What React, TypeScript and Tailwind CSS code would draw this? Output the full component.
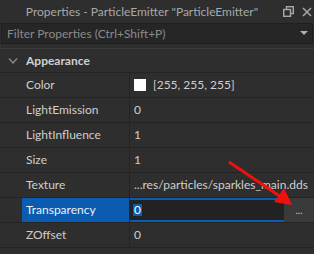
import React from "react";

function Row({ name, children, selected }: { name: string; children: React.ReactNode; selected?: boolean }) {
  return (
    <div className="flex h-[25px] border-b border-[#242424]">
      <div className="w-[22px] shrink-0" />
      <div
        className={
          selected
            ? "w-[107px] shrink-0 flex items-center pl-[4px] bg-[#0b5cb1] text-[#f0f0f0]"
            : "w-[107px] shrink-0 flex items-center pl-[4px] text-[#cfcfcf]"
        }
      >
        {name}
      </div>
      <div className="w-px bg-[#242424] shrink-0" />
      <div className="flex-1 flex items-center min-w-0">{children}</div>
    </div>
  );
}

export default function App() {
  return (
    <div
      className="w-[314px] h-[254px] bg-[#2e2e2e] overflow-hidden relative text-[12px] leading-none"
      style={{ fontFamily: "Lato, 'Noto Sans', sans-serif" }}
    >
      {/* Title bar */}
      <div className="h-[23px] flex items-center relative">
        <div className="w-full text-center text-[#a8a8a8] text-[12px] pr-[30px]">
          Properties - ParticleEmitter "ParticleEmitter"
        </div>
        <div className="absolute right-[2px] top-[6px] flex items-center gap-[8px]">
          <svg width="11" height="11" viewBox="0 0 11 11" fill="none" stroke="#a8a8a8" strokeWidth="1.4">
            <rect x="3.5" y="0.7" width="6.8" height="6.8" />
            <rect x="0.7" y="3.5" width="6.8" height="6.8" fill="#2e2e2e" />
          </svg>
          <svg width="10" height="10" viewBox="0 0 10 10" stroke="#a8a8a8" strokeWidth="1.5">
            <path d="M1 1L9 9M9 1L1 9" />
          </svg>
        </div>
      </div>
      {/* Filter */}
      <div className="mx-[1px] h-[21px] bg-[#262626] border border-[#1e1e1e] flex items-center pl-[5px] pr-[4px]">
        <span className="flex-1 text-[#8a8a8a] text-[12px]">Filter Properties (Ctrl+Shift+P)</span>
        <svg width="8" height="5" viewBox="0 0 8 5">
          <path d="M0 0H8L4 4Z" fill="#b0b0b0" />
        </svg>
      </div>
      <div className="h-[4px]" />
      {/* Section */}
      <div className="border-t border-[#3a3a3a]">
        <div className="h-[24px] flex items-center border-b border-[#242424]">
          <div className="w-[26px] flex justify-center">
            <svg width="10" height="6" viewBox="0 0 10 6" fill="none" stroke="#8a8a8a" strokeWidth="1.3">
              <path d="M1 0.5L5 5L9 0.5" />
            </svg>
          </div>
          <span className="font-bold text-[#d0d0d0] text-[12px]">Appearance</span>
        </div>
        <Row name="Color">
          <div className="ml-[4px] w-[12px] h-[12px] bg-white" />
          <span className="ml-[7px] text-[#cfcfcf]">[255, 255, 255]</span>
        </Row>
        <Row name="LightEmission">
          <span className="ml-[4px] text-[#cfcfcf]">0</span>
        </Row>
        <Row name="LightInfluence">
          <span className="ml-[4px] text-[#cfcfcf]">1</span>
        </Row>
        <Row name="Size">
          <span className="ml-[4px] text-[#cfcfcf]">1</span>
        </Row>
        <Row name="Texture">
          <span className="ml-[4px] text-[#cfcfcf] whitespace-nowrap">...res/particles/sparkles_main.dds</span>
        </Row>
        <Row name="Transparency" selected>
          <div className="flex-1 h-full flex items-stretch">
            <div className="flex-1 bg-[#222222] border-y-[2px] border-[#0b5cb1] flex items-center pl-[3px]">
              <span className="bg-[#0b5cb1] text-white px-[1px]">0</span>
            </div>
            <div className="w-[30px] bg-[#3a3a3a] flex items-center justify-center text-[#d0d0d0] text-[10px]">...</div>
          </div>
        </Row>
        <Row name="ZOffset">
          <span className="ml-[4px] text-[#cfcfcf]">0</span>
        </Row>
      </div>
      {/* Red arrow */}
      <svg className="absolute left-0 top-0 pointer-events-none" width="314" height="254">
        <line x1="229" y1="162" x2="281" y2="197" stroke="#f01010" strokeWidth="3" />
        <path d="M292 205L274 202L284 188Z" fill="#f01010" />
      </svg>
    </div>
  );
}
